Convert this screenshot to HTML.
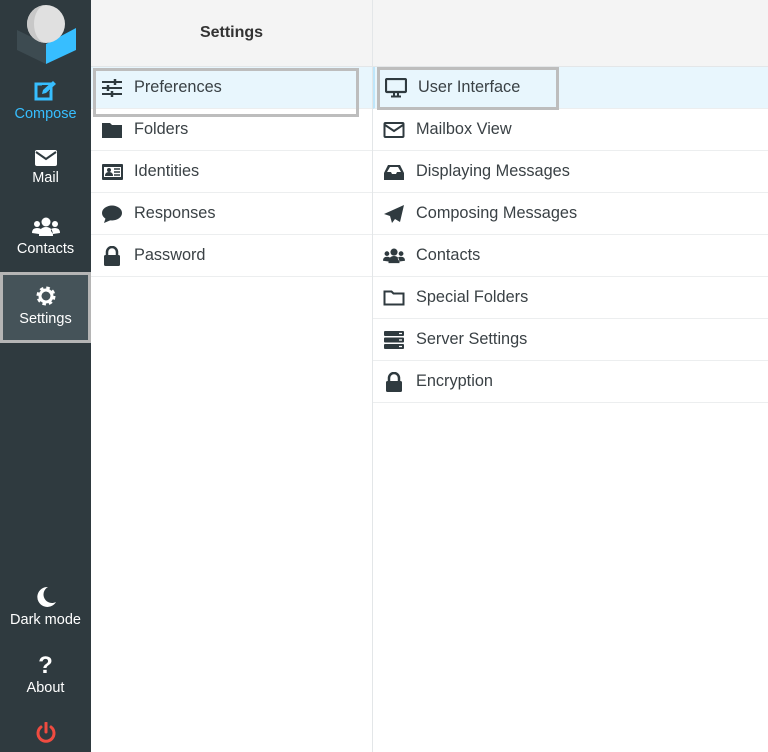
<!DOCTYPE html>
<html><head><style>
*{box-sizing:border-box;margin:0;padding:0}
body{width:768px;height:752px;overflow:hidden;font-family:"Liberation Sans",sans-serif;background:#fff;position:relative;color:#3a4145}
#side{position:absolute;left:0;top:0;width:91px;height:752px;background:#2f3a3f}
.si{position:absolute;left:0;width:91px;text-align:center;color:#fff;font-size:14.5px}
.si svg{display:block;margin:0 auto 4px}
#c2{position:absolute;left:91px;top:0;width:282px;height:752px;border-right:1px solid #e3e6e8}
#c3{position:absolute;left:373px;top:0;width:395px;height:752px}
.hdr{height:67px;background:#f4f4f4;border-bottom:1px solid #e3e6e8;text-align:center;line-height:66px;font-weight:bold;font-size:16px;color:#333}
.row{height:42px;border-bottom:1px solid #eceeef;display:flex;align-items:center;font-size:16.3px;color:#3a4145;position:relative}
.row svg{width:22px;height:20px;margin:0 11px 0 10px;flex:none}
.sel{background:#e8f6fd}
.box{position:absolute;border:3px solid #bdbdbd}
</style></head><body>
<div id="side">
 <svg style="position:absolute;left:15px;top:4px" width="62" height="60" viewBox="0 0 62 60">
  <polygon points="2,26 31,40 31,60 2,46" fill="#3d4b51"/>
  <polygon points="31,40 61,24 61,46 31,60" fill="#37beff"/>
  <circle cx="31" cy="20" r="19" fill="#e0e0e0"/>
  <path d="M31 1a19 19 0 0 0 0 38a12 19 0 0 1 0-38z" fill="#c8c8c8"/>
 </svg>
 <div class="si" style="top:80px;color:#37beff"><svg width="24" height="22" viewBox="0 0 24 22"><rect x="2" y="4" width="15" height="15" fill="none" stroke="#37beff" stroke-width="3"/><rect x="8" y="5" width="8" height="6" fill="#2f3a3f"/><path d="M8 14l1-4 10-9 3 3-10 9z" fill="#37beff"/></svg>Compose</div>
 <div class="si" style="top:150px"><svg width="22" height="16" viewBox="0 0 22 16"><rect width="22" height="16" rx="2" fill="#fff"/><path d="M1 2l10 7 10-7" fill="none" stroke="#2f3a3f" stroke-width="2"/></svg>Mail</div>
 <div class="si" style="top:217px"><svg width="28" height="20" viewBox="0 0 28 20"><circle cx="14" cy="5" r="4.5" fill="#fff"/><circle cx="5" cy="7" r="3" fill="#fff"/><circle cx="23" cy="7" r="3" fill="#fff"/><path d="M7 19q0-9 7-9t7 9z M0 16q0-5 5-5t4 3l-2 3z M28 16q0-5-5-5t-4 3l2 3z" fill="#fff"/></svg>Contacts</div>
 <div style="position:absolute;left:0;top:272px;width:91px;height:71px;background:#455359;border:3px solid #b5b5b5"></div>
 <div class="si" style="top:285px"><svg width="22" height="22" viewBox="0 0 22 22"><circle cx="11" cy="11" r="7" fill="none" stroke="#fff" stroke-width="5" stroke-dasharray="3 2.5"/><circle cx="11" cy="11" r="6" fill="none" stroke="#fff" stroke-width="3"/></svg>Settings</div>
 <div class="si" style="top:586px"><svg width="22" height="22" viewBox="0 0 22 22"><path d="M13 1a10 10 0 1 0 8 15a8 8 0 0 1-8-15z" fill="#fff"/></svg>Dark mode</div>
 <div class="si" style="top:654px"><div style="font-weight:bold;font-size:24px;line-height:24px;margin-bottom:2px">?</div>About</div>
 <svg style="position:absolute;left:35px;top:722px" width="22" height="22" viewBox="0 0 22 22"><path d="M6 5a8 8 0 1 0 10 0" fill="none" stroke="#f04b40" stroke-width="3" stroke-linecap="round"/><path d="M11 1v9" stroke="#f04b40" stroke-width="3" stroke-linecap="round"/></svg>
</div>
<div id="c2">
 <div class="hdr">Settings</div>
 <div class="row sel"><svg viewBox="0 0 22 20"><path d="M1 4h20M1 10h20M1 16h20" stroke="#2f3a3f" stroke-width="2"/><path d="M14 1v6M7 7v6M11 13v6" stroke="#2f3a3f" stroke-width="2.5"/></svg>Preferences</div>
 <div class="row"><svg viewBox="0 0 22 20"><path d="M1 3h8l2 2h10v13H1z" fill="#2f3a3f"/></svg>Folders</div>
 <div class="row"><svg viewBox="0 0 22 20"><rect x="1" y="2" width="21" height="16" rx="1" fill="#2f3a3f"/><rect x="3" y="5" width="17" height="10" fill="#fff"/><circle cx="8" cy="8" r="2" fill="#2f3a3f"/><path d="M4 14q0-4 4-4t4 4z" fill="#2f3a3f"/><path d="M13 7h6M13 10h6M13 13h6" stroke="#2f3a3f" stroke-width="1.5"/></svg>Identities</div>
 <div class="row"><svg viewBox="0 0 22 20"><ellipse cx="11" cy="9" rx="10" ry="7.5" fill="#2f3a3f"/><path d="M3 19l2-6 5 3z" fill="#2f3a3f"/></svg>Responses</div>
 <div class="row"><svg viewBox="0 0 22 20"><path d="M6 9V6a5 5 0 0 1 10 0v3" fill="none" stroke="#2f3a3f" stroke-width="2.5"/><rect x="3" y="9" width="16" height="11" rx="1.5" fill="#2f3a3f"/></svg>Password</div>
 <div class="box" style="left:2px;top:68px;width:266px;height:49px"></div>
</div>
<div id="c3">
 <div class="hdr"></div>
 <div class="row sel" style="border-left:2px solid #bfe6fa"><svg viewBox="0 0 22 20"><rect x="1" y="1" width="20" height="13" rx="1" fill="none" stroke="#2f3a3f" stroke-width="2.2"/><path d="M9 14v4M13 14v4M6 18.5h10" stroke="#2f3a3f" stroke-width="2"/></svg>User Interface</div>
 <div class="row"><svg viewBox="0 0 22 20"><rect x="1.5" y="3" width="19" height="14" rx="1" fill="none" stroke="#2f3a3f" stroke-width="2"/><path d="M2 5l9 6 9-6" fill="none" stroke="#2f3a3f" stroke-width="2"/></svg>Mailbox View</div>
 <div class="row"><svg viewBox="0 0 22 20"><path d="M1 11l4-8h12l4 8v7H1z" fill="#2f3a3f"/><path d="M4 10l3-5h8l3 5h-4l-1 2h-4l-1-2z" fill="#fff"/></svg>Displaying Messages</div>
 <div class="row"><svg viewBox="0 0 22 20"><path d="M21 1L1 10l6 2 2 7 3-4 5 3z" fill="#2f3a3f"/></svg>Composing Messages</div>
 <div class="row"><svg viewBox="0 0 28 20"><circle cx="14" cy="5" r="4.5" fill="#2f3a3f"/><circle cx="5" cy="7" r="3" fill="#2f3a3f"/><circle cx="23" cy="7" r="3" fill="#2f3a3f"/><path d="M7 19q0-9 7-9t7 9z M0 16q0-5 5-5t4 3l-2 3z M28 16q0-5-5-5t-4 3l2 3z" fill="#2f3a3f"/></svg>Contacts</div>
 <div class="row"><svg viewBox="0 0 22 20"><path d="M1.5 3.5h7l2 2h10v11h-19z" fill="none" stroke="#2f3a3f" stroke-width="2"/></svg>Special Folders</div>
 <div class="row"><svg viewBox="0 0 22 20"><rect x="1" y="1" width="20" height="5" rx="1" fill="#2f3a3f"/><rect x="1" y="7.5" width="20" height="5" rx="1" fill="#2f3a3f"/><rect x="1" y="14" width="20" height="5" rx="1" fill="#2f3a3f"/><path d="M16 3.5h3M16 10h3M16 16.5h3" stroke="#fff" stroke-width="1.2"/></svg>Server Settings</div>
 <div class="row"><svg viewBox="0 0 22 20"><path d="M6 9V6a5 5 0 0 1 10 0v3" fill="none" stroke="#2f3a3f" stroke-width="2.5"/><rect x="3" y="9" width="16" height="11" rx="1.5" fill="#2f3a3f"/></svg>Encryption</div>
 <div class="box" style="left:4px;top:67px;width:182px;height:43px"></div>
</div>
</body></html>
